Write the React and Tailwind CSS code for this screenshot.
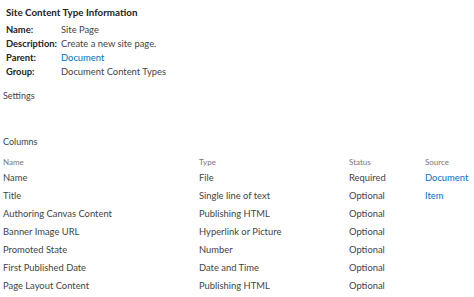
export default function App() {
  const rows = [
    ["Name", "File", "Required", "Document"],
    ["Title", "Single line of text", "Optional", "Item"],
    ["Authoring Canvas Content", "Publishing HTML", "Optional", ""],
    ["Banner Image URL", "Hyperlink or Picture", "Optional", ""],
    ["Promoted State", "Number", "Optional", ""],
    ["First Published Date", "Date and Time", "Optional", ""],
    ["Page Layout Content", "Publishing HTML", "Optional", ""],
  ];
  const info = [
    ["Name:", "Site Page", false],
    ["Description:", "Create a new site page.", false],
    ["Parent:", "Document", true],
    ["Group:", "Document Content Types", false],
  ];
  return (
    <div className="w-[474px] h-[297px] bg-white overflow-hidden text-[#333] font-['Lato',sans-serif] text-[9.4px] leading-none">
      <div className="pl-[6px] pt-[6px]">
        <div className="font-bold text-[9.8px] text-[#222] h-[13px] leading-[13px]">Site Content Type Information</div>
        <div className="mt-[4px] flex flex-col">
          {info.map(([k, v, link]) => (
            <div key={k} className="flex h-[14px] items-center">
              <div className="w-[55px] font-bold text-[#222] whitespace-nowrap">{k}</div>
              <div className={link ? "text-[#0072c6]" : "text-[#444]"}>{v}</div>
            </div>
          ))}
        </div>
      </div>
      <div className="pl-[3px] mt-[9px] h-[14px] flex items-center text-[#444] text-[9px]">Settings</div>
      <div className="pl-[3px] mt-[32px] h-[14px] flex items-center text-[#444] text-[9px]">Columns</div>
      <div className="pl-[3px] mt-[6px]">
        <div className="grid grid-cols-[196px_150px_76px_1fr] h-[15px] items-center text-[8px] text-[#777]">
          <div>Name</div>
          <div>Type</div>
          <div>Status</div>
          <div>Source</div>
        </div>
        {rows.map((r) => (
          <div key={r[0]} className="grid grid-cols-[196px_150px_76px_1fr] h-[18px] items-center text-[#444]">
            <div>{r[0]}</div>
            <div>{r[1]}</div>
            <div>{r[2]}</div>
            <div className="text-[#0072c6]">{r[3]}</div>
          </div>
        ))}
      </div>
    </div>
  );
}
